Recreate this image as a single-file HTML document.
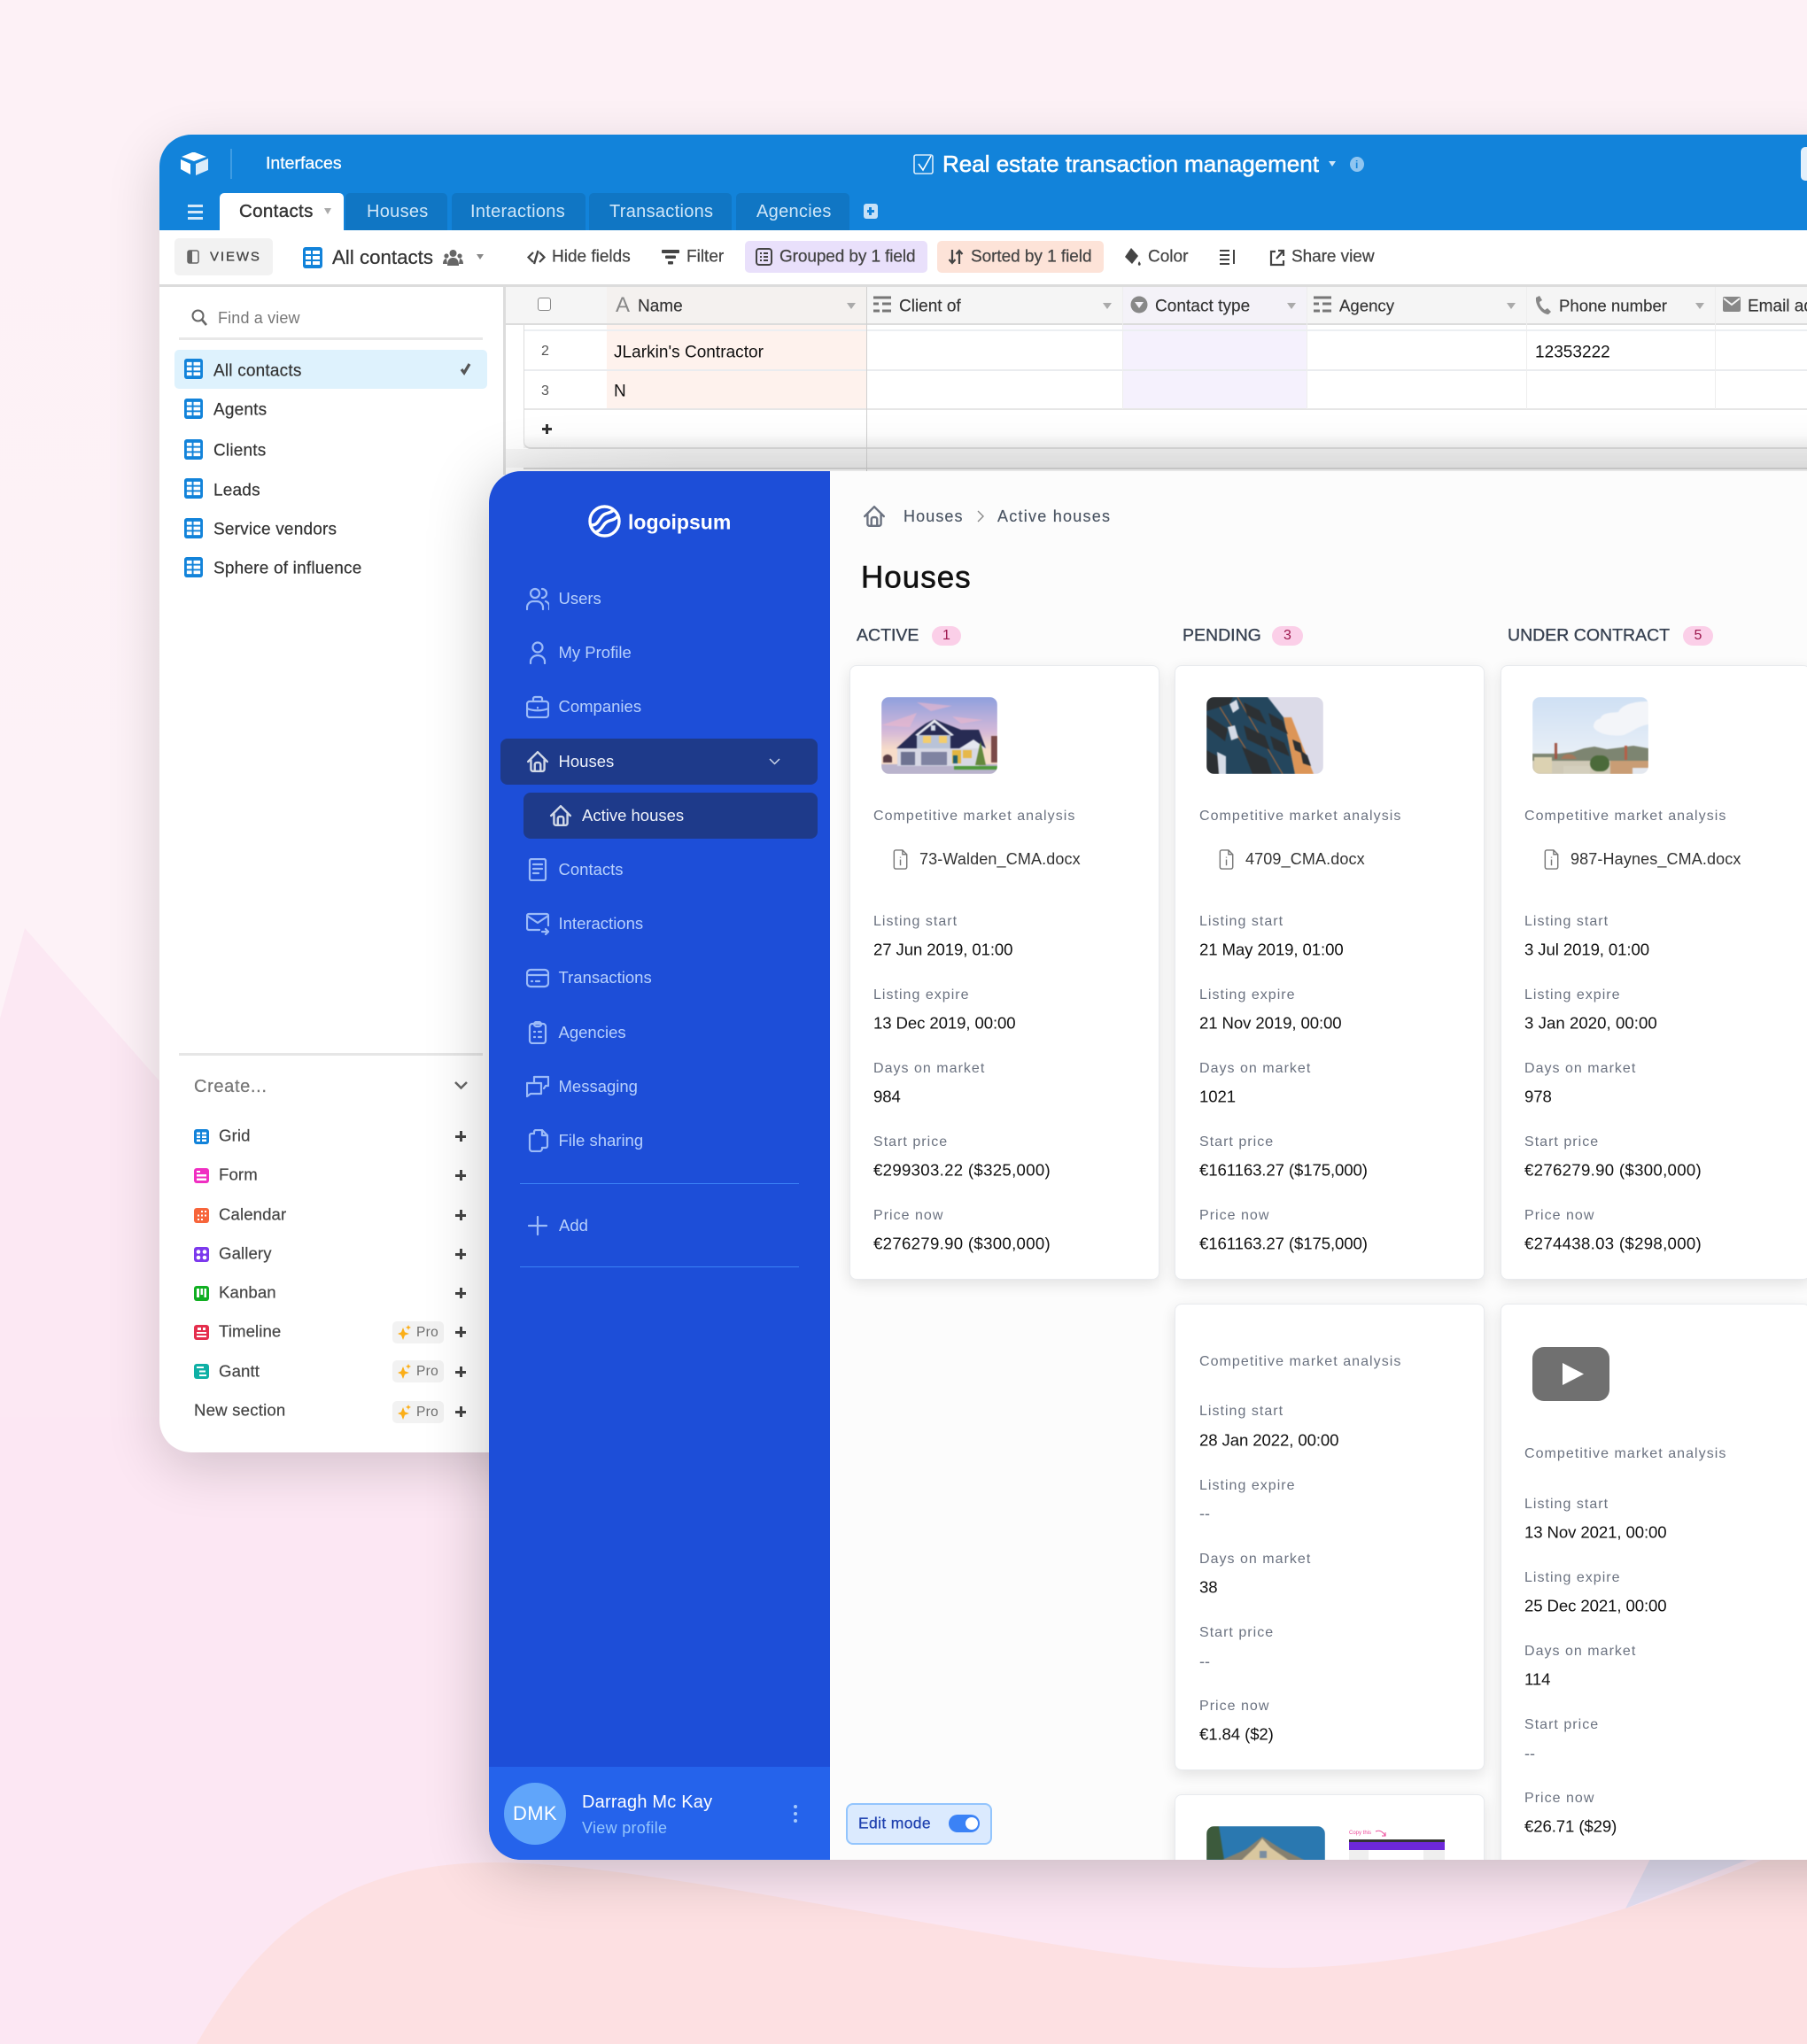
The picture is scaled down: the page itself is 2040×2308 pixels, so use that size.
<!DOCTYPE html>
<html lang="en"><head><meta charset="utf-8"><title>Houses</title>
<style>
*{box-sizing:border-box}
html,body{margin:0;padding:0;width:2040px;height:2308px;overflow:hidden;background:#fdf2f8}
body{position:relative;font-family:"Liberation Sans",sans-serif}
.a{position:absolute}
.t{position:absolute;white-space:nowrap;line-height:1;transform:translateY(-50%)}
.i{position:absolute;display:block;overflow:visible}
.tb{font-size:19px;color:#444;-webkit-text-stroke:.25px #444}
.h{font-size:19px;color:#333;-webkit-text-stroke:.15px #333;margin-top:1.5px}
.c{font-size:19px;color:#111;margin-top:1.5px;letter-spacing:.03px}
.v{font-size:19px;color:#333;-webkit-text-stroke:.2px #333;left:241px;letter-spacing:.2px;margin-top:1.5px}
.cr{font-size:18.6px;color:#444;-webkit-text-stroke:.2px #444;left:247px;letter-spacing:.1px}
.tab{position:absolute;top:218px;height:42px;background:#1076c4;border-radius:5px 5px 0 0}
.tt{font-size:20px;color:#cfe6f8;top:239px;letter-spacing:.3px}
.car{position:absolute;width:0;height:0;border-left:5px solid transparent;border-right:5px solid transparent;border-top:7px solid #aaa}
.pl{position:absolute;left:514px;width:12px;height:12px;background:linear-gradient(#444,#444) center/12px 3px no-repeat,linear-gradient(#444,#444) center/3px 12px no-repeat}
.pro{position:absolute;left:443px;width:58px;height:25px;background:#f2f2f2;border-radius:5px}
.pro span{position:absolute;left:27px;top:5px;font-size:15.5px;line-height:1;color:#6f6f6f;letter-spacing:.3px}
.pro svg{position:absolute;left:6px;top:4px}
.n{font-size:18.5px;color:#b7d0fc;left:630.5px}
.nic{position:absolute;left:594px;fill:none;stroke:#9bbaf8;stroke-width:2.2;stroke-linecap:round;stroke-linejoin:round;width:26px;height:26px}
.card{position:absolute;width:350px;background:#fff;border:1px solid #e8eaee;border-radius:8px;box-shadow:0 5px 16px rgba(0,0,0,.11)}
.l{font-size:16px;color:#6b7280;letter-spacing:1.02px;margin-top:1.5px}
.cm{font-size:16px;color:#6b7280;letter-spacing:1.05px;margin-top:1.5px}
.val{font-size:18.6px;color:#111;letter-spacing:-.1px;margin-top:1px}
.pr{letter-spacing:.32px}
.dash{font-size:18px;color:#6b7280}
.f{font-size:18px;color:#333;letter-spacing:.13px}
.col{font-size:19.5px;color:#374151;-webkit-text-stroke:.35px #374151;top:718px}
.pill{position:absolute;top:707px;height:22px;background:#fbcfe8;border-radius:11px;color:#9d174d;font-size:16px;line-height:22px;text-align:center}
</style></head><body>

<svg class="a" style="left:0;top:0" width="2040" height="2308" viewBox="0 0 2040 2308">
<defs><linearGradient id="bg" x1="0" y1="0" x2="0" y2="1"><stop offset="0" stop-color="#fdf1f6"/><stop offset="1" stop-color="#fdf3f8"/></linearGradient></defs>
<rect width="2040" height="2308" fill="url(#bg)"/>
<path d="M0 1150L28 1048L620 1720V2308H0Z" fill="#fce8f3"/>
<rect x="0" y="1600" width="2040" height="708" fill="#fce7f3"/>
<path d="M1870 2085L1835 2155L2010 2085Z" fill="#e3dff2"/>
<path d="M222 2308C300 2170 400 2103 559 2103C760 2103 1230 2222 1444 2222C1620 2222 1830 2165 1990 2100L2040 2060V2308Z" fill="#fde0e2"/>
</svg>

<!-- Airtable window -->
<div class="a" style="left:180px;top:152px;width:1900px;height:1488px;background:#fff;border-radius:36px 0 0 36px;box-shadow:0 18px 60px rgba(0,0,0,.16)"></div>
<div class="a" style="left:180px;top:152px;width:1860px;height:108px;background:#1283da;border-radius:36px 0 0 0"></div>

<svg class="i" style="left:203px;top:171px" width="33" height="28" viewBox="0 0 33 28"><path d="M14 1L2 6l14 5 14-5-13-5z" fill="#fff"/><path d="M1 9v11l11 6V14z" fill="#fff"/><path d="M18 14v13l14-6V8z" fill="#fff" opacity=".85"/></svg>
<div class="a" style="left:260px;top:168px;width:2px;height:34px;background:#3f9ce3"></div>
<div class="t" style="left:300px;top:185px;font-size:19.5px;color:#fff;-webkit-text-stroke:.3px #fff">Interfaces</div>
<svg class="i" style="left:1031px;top:173px" width="25" height="24" viewBox="0 0 25 24" fill="none" stroke="#d9ecfa" stroke-width="1.6"><rect x="1" y="2" width="21" height="21" rx="2"/><path d="M6 12l5 7 9-16" stroke="#fff"/></svg>
<div class="t" style="left:1064px;top:185px;font-size:26px;color:#fff;-webkit-text-stroke:.55px #fff">Real estate transaction management</div>
<div class="car" style="left:1500px;top:182px;border-top-color:#cfe6f8;border-left-width:4px;border-right-width:4px;border-top-width:6px"></div>
<div class="a" style="left:1524px;top:177px;width:16px;height:17px;border-radius:50%;background:#8fc5f0"></div>
<div class="t" style="left:1530px;top:186px;font-size:12px;color:#1283da;font-weight:bold">i</div>
<div class="a" style="left:2033px;top:166px;width:20px;height:38px;background:#e3f0fb;border-radius:5px"></div>

<div class="a" style="left:212px;top:231px;width:17px;height:3px;background:#d3e8f9"></div>
<div class="a" style="left:212px;top:238px;width:17px;height:3px;background:#d3e8f9"></div>
<div class="a" style="left:212px;top:245px;width:17px;height:3px;background:#d3e8f9"></div>
<div class="a" style="left:248px;top:218px;width:140px;height:42px;background:#fff;border-radius:5px 5px 0 0"></div>
<div class="t" style="left:270px;top:239px;font-size:20.5px;color:#333;-webkit-text-stroke:.4px #333;letter-spacing:.35px">Contacts</div>
<div class="car" style="left:366px;top:235px;border-left-width:4px;border-right-width:4px"></div>
<div class="tab" style="left:390px;width:115px"></div><div class="t tt" style="left:414px">Houses</div>
<div class="tab" style="left:510px;width:151px"></div><div class="t tt" style="left:531px">Interactions</div>
<div class="tab" style="left:665px;width:161px"></div><div class="t tt" style="left:688px">Transactions</div>
<div class="tab" style="left:831px;width:128px"></div><div class="t tt" style="left:854px">Agencies</div>
<div class="a" style="left:975px;top:230px;width:16px;height:17px;border-radius:3px;background:#c7e1f7"></div>
<div class="a" style="left:979px;top:237px;width:8px;height:3px;background:#1283da"></div><div class="a" style="left:981px;top:234px;width:3px;height:9px;background:#1283da"></div>

<!-- toolbar -->
<div class="a" style="left:180px;top:321px;width:1860px;height:3px;background:#dcdcdc"></div>
<div class="a" style="left:197px;top:269px;width:111px;height:42px;background:#f2f2f2;border-radius:5px"></div>
<svg class="i" style="left:211px;top:282px" width="15" height="16"><rect x="1" y="1" width="12" height="14" rx="2" fill="none" stroke="#666" stroke-width="1.5"/><rect x="1" y="1" width="5" height="14" rx="1" fill="#666"/></svg>
<div class="t" style="left:237px;top:290px;font-size:15px;color:#444;-webkit-text-stroke:.3px #444;letter-spacing:1.9px">VIEWS</div>
<svg class="i" style="left:342px;top:279px" width="22" height="24" viewBox="0 0 22 24"><use href="#g"/></svg>
<div class="t" style="left:375px;top:291px;font-size:22.3px;color:#333;-webkit-text-stroke:.25px #333">All contacts</div>
<svg class="i" style="left:500px;top:281px" width="23" height="20" viewBox="0 0 23 20" fill="#666"><circle cx="11.5" cy="5" r="4"/><circle cx="4" cy="8" r="2.6"/><circle cx="19" cy="8" r="2.6"/><path d="M5 19c0-7 3-9 6.500-9s6.500 2 6.500 9z"/><path d="M0 17c0-4 2-6 4-6l1 6zM23 17c0-4-2-6-4-6l-1 6z"/></svg>
<div class="car" style="left:538px;top:287px;border-top-color:#888;border-left-width:4px;border-right-width:4px;border-top-width:6px"></div>
<svg class="i" style="left:595px;top:281px" width="21" height="19" viewBox="0 0 21 19" fill="none" stroke="#444" stroke-width="2.2"><path d="M7 4L1.500 9.500 7 15M14 4l5.500 5.500L14 15"/><path d="M12.500 2L8 17" stroke-width="2.4"/></svg>
<div class="t tb" style="left:623px;top:290px">Hide fields</div>
<svg class="i" style="left:747px;top:282px" width="20" height="17"><rect y="0" width="20" height="4" rx="1" fill="#444"/><rect x="4" y="6.5" width="12" height="3.5" rx="1" fill="#444"/><rect x="7" y="13" width="6" height="3.5" rx="1" fill="#444"/></svg>
<div class="t tb" style="left:775px;top:290px">Filter</div>
<div class="a" style="left:841px;top:272px;width:206px;height:36px;background:#e9e0fb;border-radius:5px"></div>
<svg class="i" style="left:853px;top:280px" width="19" height="20" fill="none"><rect x="1" y="1" width="17" height="18" rx="3" stroke="#444" stroke-width="2"/><path d="M5 6h2M9 6h5M5 10h2M9 10h5M5 14h2M9 14h5" stroke="#444" stroke-width="2"/></svg>
<div class="t tb" style="left:880px;top:290px;letter-spacing:-.1px">Grouped by 1 field</div>
<div class="a" style="left:1058px;top:272px;width:188px;height:36px;background:#fde3d8;border-radius:5px"></div>
<svg class="i" style="left:1070px;top:281px" width="18" height="18" fill="none" stroke="#444" stroke-width="2.2"><path d="M5 1v15M1.500 12L5 16l3.500-4M13 17V2M9.500 6L13 2l3.500 4"/></svg>
<div class="t tb" style="left:1096px;top:290px;letter-spacing:-.05px">Sorted by 1 field</div>
<svg class="i" style="left:1269px;top:280px" width="20" height="21" viewBox="0 0 20 21" fill="#444"><path d="M8 0l8 9-7 9-8-8zM17 15c1.500 2 2 3 1.500 4s-2 1-2.500 0 0-2 1-4z"/></svg>
<div class="t tb" style="left:1296px;top:290px">Color</div>
<svg class="i" style="left:1377px;top:281px" width="20" height="18" fill="none" stroke="#444" stroke-width="2"><path d="M0 2h11M0 7h11M0 12h11M0 17h11M16 1v16"/></svg>
<div class="t tb" style="left:1458px;top:290px;letter-spacing:-.05px">Share view</div>
<svg class="i" style="left:1433px;top:281px" width="18" height="19" fill="none" stroke="#444" stroke-width="2.2"><path d="M7 3H2v15h14v-5M8 11l8-9M10 2h6v6"/></svg>

<!-- grid header -->
<div class="a" style="left:568px;top:324px;width:1472px;height:42px;background:#f5f5f5"></div>
<div class="a" style="left:685px;top:324px;width:293px;height:42px;background:#f4f1ef"></div>
<div class="a" style="left:1267px;top:324px;width:208px;height:42px;background:#f4f2f8"></div>
<div class="a" style="left:568px;top:365px;width:1472px;height:2px;background:#dcdcdc"></div>
<div class="a" style="left:568px;top:324px;width:3px;height:212px;background:#dcdcdc"></div>
<div class="a" style="left:607px;top:336px;width:15px;height:15px;border:1.5px solid #888;border-radius:3px;background:#fff"></div>
<div class="t" style="left:695px;top:345px;font-size:24px;color:#888">A</div>
<div class="t h" style="left:720px;top:344px">Name</div>
<div class="car" style="left:956px;top:342px"></div>
<svg class="i" style="left:986px;top:334px" width="21" height="20"><path d="M0 2h20M10 9h10M10 17h10M0 17h7M0 9h6" stroke="#777" stroke-width="3"/></svg>
<div class="t h" style="left:1015px;top:344px">Client of</div>
<div class="car" style="left:1245px;top:342px"></div>
<svg class="i" style="left:1276px;top:334px" width="20" height="20"><circle cx="10" cy="10" r="9.5" fill="#888"/><path d="M5 7h10l-5 7z" fill="#f4f2f8"/></svg>
<div class="t h" style="left:1304px;top:344px;letter-spacing:.05px">Contact type</div>
<div class="car" style="left:1453px;top:342px"></div>
<svg class="i" style="left:1483px;top:334px" width="21" height="20"><path d="M0 2h20M10 9h10M10 17h10M0 17h7M0 9h6" stroke="#777" stroke-width="3"/></svg>
<div class="t h" style="left:1512px;top:344px;font-size:18.6px">Agency</div>
<div class="car" style="left:1701px;top:342px"></div>
<svg class="i" style="left:1733px;top:334px" width="20" height="21" viewBox="0 0 20 21"><path d="M1 2l4-2 3 5-3 2c0 3 3 7 6 9l3-2 4 4-3 3C8 21 0 11 1 2z" fill="#888"/></svg>
<div class="t h" style="left:1760px;top:344px;font-size:18.6px">Phone number</div>
<div class="car" style="left:1914px;top:342px"></div>
<svg class="i" style="left:1945px;top:335px" width="20" height="17"><rect width="20" height="17" rx="2" fill="#888"/><path d="M1 2l9 7 9-7" fill="none" stroke="#f5f5f5" stroke-width="2"/></svg>
<div class="t h" style="left:1973px;top:344px">Email ad</div>

<!-- grid body -->
<div class="a" style="left:685px;top:367px;width:293px;height:95px;background:#fef2ed"></div>
<div class="a" style="left:1267px;top:367px;width:208px;height:95px;background:#f5f1fd"></div>
<div class="a" style="left:591px;top:372px;width:1449px;height:2px;background:#eceff2"></div>
<div class="a" style="left:591px;top:417px;width:1449px;height:2px;background:#eaecef"></div>
<div class="a" style="left:591px;top:461px;width:1449px;height:2px;background:#e6e6e6"></div>
<div class="a" style="left:1267px;top:324px;width:1px;height:138px;background:#eee"></div>
<div class="a" style="left:1475px;top:324px;width:1px;height:138px;background:#eee"></div>
<div class="a" style="left:1723px;top:324px;width:1px;height:138px;background:#eee"></div>
<div class="a" style="left:1936px;top:324px;width:1px;height:138px;background:#eee"></div>
<div class="a" style="left:591px;top:366px;width:1px;height:130px;background:#ddd"></div>
<div class="t" style="left:611px;top:397px;font-size:16px;color:#555">2</div>
<div class="t" style="left:611px;top:442px;font-size:16px;color:#555">3</div>
<div class="t c" style="left:693px;top:396px">JLarkin's Contractor</div>
<div class="t c" style="left:693px;top:440px">N</div>
<div class="t c" style="left:1733px;top:396px">12353222</div>
<div class="a" style="left:612px;top:483px;width:11px;height:3px;background:#333"></div><div class="a" style="left:616px;top:479px;width:3px;height:11px;background:#333"></div>
<div class="a" style="left:591px;top:490px;width:1449px;height:16px;background:linear-gradient(rgba(255,255,255,0),rgba(238,238,238,.8))"></div>
<div class="a" style="left:591px;top:495px;width:20px;height:12px;border-left:1px solid #ddd;border-bottom:2px solid #d8d8d8;border-radius:0 0 0 8px"></div>
<div class="a" style="left:611px;top:505px;width:1429px;height:2px;background:#d8d8d8"></div>
<div class="a" style="left:571px;top:507px;width:1469px;height:21px;background:linear-gradient(90deg,#f6f6f6,#efefef 200px)"></div>
<div class="a" style="left:591px;top:528px;width:1449px;height:2px;background:#d8d8d8"></div>
<div class="a" style="left:978px;top:324px;width:1px;height:208px;background:#d0d0d0"></div>

<!-- Views sidebar -->
<svg class="i" style="left:216px;top:349px" width="18" height="19" fill="none" stroke="#666" stroke-width="2"><circle cx="7.5" cy="7.5" r="6"/><path d="M12 12l5 6" stroke-width="2.6"/></svg>
<div class="t" style="left:246px;top:359px;font-size:18px;color:#777;letter-spacing:.15px">Find a view</div>
<div class="a" style="left:202px;top:381px;width:343px;height:3px;background:#e8e8e8"></div>
<div class="a" style="left:197px;top:395px;width:353px;height:44px;background:#def2fd;border-radius:5px"></div>
<svg width="0" height="0" style="position:absolute"><defs>
<symbol id="g" viewBox="0 0 22 24"><rect width="22" height="24" rx="3" fill="#1283da"/><g fill="#fff"><rect x="3" y="4" width="6" height="4"/><rect x="11" y="4" width="8" height="4"/><rect x="3" y="10" width="6" height="4"/><rect x="11" y="10" width="8" height="4"/><rect x="3" y="16" width="6" height="4"/><rect x="11" y="16" width="8" height="4"/></g></symbol>
<symbol id="home" viewBox="0 0 24 24"><path d="M2 12L12 2l10 10M5 10v10a2 2 0 002 2h10a2 2 0 002-2V10M9 22v-7a2 2 0 012-2h2a2 2 0 012 2v7" fill="none" stroke-width="2.2" stroke-linecap="round" stroke-linejoin="round"/></symbol>
<symbol id="star" viewBox="0 0 15 17"><path d="M6 3l2 5.200L13 10l-5 1.800L6 17l-2-5.200L0 10l4-1.800zM12 0l.8 1.900L15 3l-2.200.9L12 6l-.8-2.100L9 3l2.200-1.100z" fill="#fbae17"/></symbol>
<symbol id="doc" viewBox="0 0 18 24"><path d="M3 1h8l5 5v15a2 2 0 01-2 2H3a2 2 0 01-2-2V3a2 2 0 012-2zM11 1v5h5M8.500 12v7M8.500 9v1" fill="none" stroke="#777" stroke-width="1.5"/></symbol>
</defs></svg>
<svg class="i" style="left:208px;top:405px" width="21" height="23"><use href="#g"/></svg><div class="t v" style="top:417px">All contacts</div>
<svg class="i" style="left:519px;top:410px" width="14" height="13" fill="none" stroke="#555" stroke-width="3.2"><path d="M2 7l3 4 6-10"/></svg>
<svg class="i" style="left:208px;top:450px" width="21" height="23"><use href="#g"/></svg><div class="t v" style="top:461px">Agents</div>
<svg class="i" style="left:208px;top:496px" width="21" height="23"><use href="#g"/></svg><div class="t v" style="top:507px">Clients</div>
<svg class="i" style="left:208px;top:540px" width="21" height="23"><use href="#g"/></svg><div class="t v" style="top:552px">Leads</div>
<svg class="i" style="left:208px;top:585px" width="21" height="23"><use href="#g"/></svg><div class="t v" style="top:596px">Service vendors</div>
<svg class="i" style="left:208px;top:629px" width="21" height="23"><use href="#g"/></svg><div class="t v" style="top:640px">Sphere of influence</div>

<div class="a" style="left:202px;top:1189px;width:343px;height:3px;background:#e6e6e6"></div>
<div class="t" style="left:219px;top:1227px;font-size:20px;color:#777;-webkit-text-stroke:.25px #777;letter-spacing:.65px">Create...</div>
<svg class="i" style="left:513px;top:1221px" width="15" height="10" fill="none" stroke="#666" stroke-width="2.5"><path d="M1 1l6.500 6.500L14 1"/></svg>

<svg class="i" style="left:219px;top:1275px" width="17" height="17"><rect width="17" height="17" rx="3" fill="#1283da"/><path d="M3 3.500h4v2.500H3zM9 3.500h5v2.500H9zM3 7.500h4V10H3zM9 7.500h5V10H9zM3 11.500h4V14H3zM9 11.500h5V14H9z" fill="#fff"/></svg>
<div class="t cr" style="top:1283px">Grid</div><div class="pl" style="top:1277px"></div>
<svg class="i" style="left:219px;top:1319px" width="17" height="17"><rect width="17" height="17" rx="3" fill="#f02fc2"/><path d="M3 3h4v2H3zM3 7h11v2.500H3zM3 11.500h11V14H3z" fill="#fff"/></svg>
<div class="t cr" style="top:1327px">Form</div><div class="pl" style="top:1321px"></div>
<svg class="i" style="left:219px;top:1364px" width="17" height="17"><rect width="17" height="17" rx="3" fill="#f7653b"/><g fill="#fff"><rect x="8" y="3" width="2" height="2"/><rect x="12" y="3" width="2" height="2"/><rect x="4" y="7.5" width="2" height="2"/><rect x="8" y="7.5" width="2" height="2"/><rect x="12" y="7.5" width="2" height="2"/><rect x="4" y="12" width="2" height="2"/><rect x="8" y="12" width="2" height="2"/></g></svg>
<div class="t cr" style="top:1372px">Calendar</div><div class="pl" style="top:1366px"></div>
<svg class="i" style="left:219px;top:1408px" width="17" height="17"><rect width="17" height="17" rx="3" fill="#7c39ed"/><g fill="#fff"><circle cx="5" cy="5.5" r="2.3"/><circle cx="12" cy="5.5" r="2.3"/><circle cx="5" cy="12" r="2.3"/><circle cx="12" cy="12" r="2.3"/></g></svg>
<div class="t cr" style="top:1416px">Gallery</div><div class="pl" style="top:1410px"></div>
<svg class="i" style="left:219px;top:1452px" width="17" height="17"><rect width="17" height="17" rx="3" fill="#11af22"/><path d="M3 3h3v10H3zM7.500 3h2.500v7H7.500zM11.500 3H14v10h-2.500z" fill="#fff"/></svg>
<div class="t cr" style="top:1460px">Kanban</div><div class="pl" style="top:1454px"></div>
<svg class="i" style="left:219px;top:1496px" width="17" height="17"><rect width="17" height="17" rx="3" fill="#e52e4d"/><path d="M4 3h4v3H4zM10 3h3v3h-3zM3 8h11v2H3zM3 12h11v2H3z" fill="#fff"/></svg>
<div class="t cr" style="top:1504px">Timeline</div><div class="pl" style="top:1498px"></div>
<div class="pro" style="top:1492px"><svg width="15" height="17"><use href="#star"/></svg><span>Pro</span></div>
<svg class="i" style="left:219px;top:1540px" width="17" height="17"><rect width="17" height="17" rx="3" fill="#0fb0a5"/><path d="M3 3h8v2H3zM6 7.500h7v2H6zM6 12h8v2H6z" fill="#fff"/></svg>
<div class="t cr" style="top:1549px">Gantt</div><div class="pl" style="top:1543px"></div>
<div class="pro" style="top:1536px"><svg width="15" height="17"><use href="#star"/></svg><span>Pro</span></div>
<div class="t cr" style="left:219px;top:1593px;letter-spacing:.2px">New section</div><div class="pl" style="top:1588px"></div>
<div class="pro" style="top:1582px"><svg width="15" height="17"><use href="#star"/></svg><span>Pro</span></div>

<!-- Modal -->
<div class="a" style="left:552px;top:532px;width:1600px;height:1568px;border-radius:36px 0 0 36px;box-shadow:0 8px 70px rgba(0,0,0,.24)"></div>
<div class="a" style="left:552px;top:532px;width:1488px;height:1568px;border-radius:36px 0 0 36px;overflow:hidden;background:#fcfcfc">
 <div class="a" style="left:0;top:0;width:385px;height:1568px;background:#1d4ed8"></div>
 <div class="a" style="left:0;top:1463px;width:385px;height:105px;background:#2563eb"></div>
</div>

<!-- logo -->
<svg class="i" style="left:664px;top:570px" width="37" height="37" viewBox="0 0 37 37" fill="none" stroke="#fff" stroke-width="3.4"><circle cx="18.5" cy="18.5" r="16.5"/><path d="M4 23c4 0 6-2 8-5s4-7 8-8 7-2 10-5"/><path d="M8 31c4-1 6-3 8-6s4-6 8-7 7-2 10-6"/></svg>
<div class="t" style="left:709px;top:590px;font-size:23px;font-weight:bold;color:#fff">logoipsum</div>

<!-- nav -->
<div class="a" style="left:565px;top:834px;width:358px;height:52px;background:#1e3a8a;border-radius:8px"></div>
<div class="a" style="left:591px;top:895px;width:332px;height:52px;background:#1e3a8a;border-radius:8px"></div>
<svg class="nic" style="top:663px" viewBox="0 0 26 26"><circle cx="10" cy="7" r="5"/><path d="M1 25v-2a7 7 0 017-7h4a7 7 0 017 7v2M18 2a5 5 0 010 10M22 16a6 6 0 014 7v2"/></svg>
<div class="t n" style="top:676px">Users</div>
<svg class="nic" style="top:724px" viewBox="0 0 26 26"><circle cx="13" cy="7" r="5.5"/><path d="M5 25v-2a8 7 0 0116 0v2"/></svg>
<div class="t n" style="top:737px">My Profile</div>
<svg class="nic" style="top:785px" viewBox="0 0 26 26"><rect x="1" y="7" width="24" height="18" rx="3"/><path d="M8 7V4a2 2 0 012-2h6a2 2 0 012 2v3M1 15c7 3 17 3 24 0M13 14v.5"/></svg>
<div class="t n" style="top:798px">Companies</div>
<svg class="i" style="left:594px;top:847px;stroke:#d1d8e6" width="26" height="26"><use href="#home"/></svg>
<div class="t n" style="top:860px;color:#eef2fa">Houses</div>
<svg class="i" style="left:868px;top:856px" width="13" height="8" fill="none" stroke="#cbd5e8" stroke-width="1.5"><path d="M1 1l5.500 5.500L12 1"/></svg>
<svg class="i" style="left:620px;top:908px;stroke:#d1d8e6" width="26" height="26"><use href="#home"/></svg>
<div class="t n" style="left:657px;top:921px;color:#eef2fa">Active houses</div>
<svg class="nic" style="top:969px" viewBox="0 0 26 26"><rect x="4" y="1" width="18" height="24" rx="2"/><path d="M8 7h10M8 12h10M8 17h6"/></svg>
<div class="t n" style="top:982px">Contacts</div>
<svg class="nic" style="top:1030px" viewBox="0 0 26 26"><path d="M25 15V4a2 2 0 00-2-2H3a2 2 0 00-2 2v14a2 2 0 002 2h12M1 4l12 8 12-8M18 22h7M22 19l3 3-3 3"/></svg>
<div class="t n" style="top:1043px">Interactions</div>
<svg class="nic" style="top:1091px" viewBox="0 0 26 26"><rect x="1" y="4" width="24" height="19" rx="4"/><path d="M1 10h24M6 17h1M11 17h4"/></svg>
<div class="t n" style="top:1104px">Transactions</div>
<svg class="nic" style="top:1153px" viewBox="0 0 26 26"><rect x="4" y="3" width="18" height="22" rx="3"/><rect x="9" y="1" width="8" height="5" rx="2.5"/><path d="M9 12h1M14 12h3M9 18h1M14 18h3"/></svg>
<div class="t n" style="top:1166px">Agencies</div>
<svg class="nic" style="top:1214px" viewBox="0 0 26 26"><path d="M9 9V2h16v10h-3l-2 3M17 9H1v15l4-3h12z"/></svg>
<div class="t n" style="top:1227px">Messaging</div>
<svg class="nic" style="top:1275px" viewBox="0 0 26 26"><path d="M9 5V3a2 2 0 012-2h7l6 6v12a2 2 0 01-2 2h-4M18 1v6h6"/><path d="M9 5H6a2 2 0 00-2 2v15a3 3 0 003 3h8a3 3 0 003-3v-1"/></svg>
<div class="t n" style="top:1288px">File sharing</div>
<div class="a" style="left:587px;top:1336px;width:315px;height:1px;background:#3b82f6"></div>
<svg class="nic" style="top:1371px" viewBox="0 0 26 26"><path d="M13 3v20M3 13h20"/></svg>
<div class="t n" style="left:631px;top:1384px">Add</div>
<div class="a" style="left:587px;top:1430px;width:315px;height:1px;background:#3b82f6"></div>

<!-- footer -->
<div class="a" style="left:569px;top:2013px;width:70px;height:70px;border-radius:50%;background:#60a5fa"></div>
<div class="t" style="left:579px;top:2048px;font-size:22px;color:#fff;letter-spacing:.3px">DMK</div>
<div class="t" style="left:657px;top:2035px;font-size:20px;color:#fff;letter-spacing:.2px">Darragh Mc Kay</div>
<div class="t" style="left:657px;top:2064px;font-size:18px;color:#93c5fd;letter-spacing:.3px">View profile</div>
<div class="a" style="left:896px;top:2038px;width:4px;height:4px;border-radius:50%;background:#a5c8fb"></div>
<div class="a" style="left:896px;top:2046px;width:4px;height:4px;border-radius:50%;background:#a5c8fb"></div>
<div class="a" style="left:896px;top:2054px;width:4px;height:4px;border-radius:50%;background:#a5c8fb"></div>

<!-- main -->
<svg class="i" style="left:974px;top:570px;stroke:#6b7280" width="26" height="26"><use href="#home"/></svg>
<div class="t" style="left:1020px;top:583px;font-size:18px;color:#4b5563;-webkit-text-stroke:.15px #4b5563;letter-spacing:1.1px">Houses</div>
<svg class="i" style="left:1103px;top:576px" width="8" height="14" fill="none" stroke="#888" stroke-width="1.4"><path d="M1 1l6 6-6 6"/></svg>
<div class="t" style="left:1126px;top:583px;font-size:18px;color:#4b5563;-webkit-text-stroke:.15px #4b5563;letter-spacing:1.25px">Active houses</div>
<div class="t" style="left:972px;top:652px;font-size:35px;color:#111;-webkit-text-stroke:.6px #111;letter-spacing:1px">Houses</div>

<div class="t col" style="left:967px">ACTIVE</div><div class="pill" style="left:1052px;width:33px">1</div>
<div class="t col" style="left:1335px">PENDING</div><div class="pill" style="left:1436px;width:35px">3</div>
<div class="t col" style="left:1702px">UNDER CONTRACT</div><div class="pill" style="left:1900px;width:34px">5</div>

<!-- clipped card area -->
<div class="a" style="left:0;top:0;width:2040px;height:2100px;overflow:hidden">
<div class="card" style="left:959px;top:751px;height:694px"></div>
<div class="card" style="left:1326px;top:751px;height:694px"></div>
<div class="card" style="left:1694px;top:751px;height:694px"></div>

<div class="a" style="left:995px;top:787px;width:131px;height:87px;border-radius:9px;overflow:hidden">
<svg width="131" height="87" viewBox="0 0 131 87" style="filter:blur(.5px)"><defs><linearGradient id="s1" x1="0" y1="0" x2="0" y2="1"><stop offset="0" stop-color="#8fa0de"/><stop offset=".45" stop-color="#d5b9d8"/><stop offset=".68" stop-color="#f7dcc9"/></linearGradient></defs>
<rect width="131" height="87" fill="url(#s1)"/><path d="M0 32l40-14-8 16zM40 6l40 4-24 6zM80 22l35 4-25 4z" fill="#eeb8cb" opacity=".6"/>
<rect y="76" width="131" height="11" fill="#b9b3cc"/>
<rect x="18" y="58" width="92" height="20" fill="#d7d8e4"/>
<path d="M17 58L40 37L50 30L60 25L72 30L90 37L110 37L118 58Z" fill="#272b53"/>
<rect x="40" y="43" width="38" height="15" fill="#b9c3d8"/>
<path d="M38 43L60 25L82 43L79 44L60 29L41 44Z" fill="#e6e8ef"/><rect x="56" y="32" width="5" height="6" fill="#d7ddea"/>
<rect x="47" y="44" width="9" height="8" fill="#f3cd6d"/><rect x="65" y="44" width="9" height="8" fill="#f3cd6d"/>
<rect x="22" y="62" width="16" height="15" fill="#6e7391"/><rect x="45" y="62" width="29" height="15" fill="#7f83a1"/>
<rect x="80" y="60" width="10" height="15" fill="#e4b640"/><rect x="81" y="66" width="5" height="9" fill="#1f5f6e"/><rect x="92" y="60" width="10" height="9" fill="#e6b84a"/>
<path d="M88 58L104 48L118 58Z" fill="#e5e7f0"/>
<path d="M106 77l6-27 6 27z" fill="#64893c"/><rect x="82" y="78" width="49" height="4" fill="#4f9a3c"/>
<path d="M2 68a6 7 0 0110 0v6H2z" fill="#5a3d44"/><rect x="124" y="44" width="7" height="30" fill="#7a4a48"/>
</svg></div>

<div class="a" style="left:1362px;top:787px;width:132px;height:87px;border-radius:9px;overflow:hidden">
<svg width="132" height="87" viewBox="0 0 132 87" style="filter:blur(.5px)"><rect width="132" height="87" fill="#dcdbe8"/>
<path d="M0 0H69L87 23L100 87H0z" fill="#24465d"/><path d="M87 23H96L121 87H100z" fill="#dc9557"/>
<path d="M8 0L62 87M35 0L86 87" stroke="#a1683f" stroke-width="1.2" fill="none"/>
<g fill="#2c3033"><path d="M0 0h30l-4 8L0 16zM0 20l24 16-3 14L0 34zM0 60l22 12-2 15H0zM42 6l18 9 8 16-22-10zM42 32l24 12 6 16-26-12zM40 56l28 14 6 17H52z"/><path d="M70 18l16 9 6 15-18-9zM72 44l16 8 6 15-18-8zM97 48l9 4 3 12-9-4zM106 60l8 6 4 12-9-3z"/></g>
<path d="M26 8l8-5 3 10-7 5zM24 34l8-2 4 14-8 3zM12 62l10 5v20H14z" fill="#d5dbe6"/></svg></div>

<div class="a" style="left:1730px;top:787px;width:131px;height:87px;border-radius:9px;overflow:hidden">
<svg width="131" height="87" viewBox="0 0 131 87" style="filter:blur(.6px)"><defs><linearGradient id="s3" x1="0" y1="0" x2="0" y2="1"><stop offset="0" stop-color="#cfe0f4"/><stop offset=".75" stop-color="#e8eff7"/></linearGradient></defs>
<rect width="131" height="87" fill="url(#s3)"/>
<path d="M69 34c0-8 6-9 8-10 2-7 14-6 20-7 4-8 16-12 34-12v26c-12 2-18 8-28 12-12 2-30-1-34-9z" fill="#f3f5f9"/>
<path d="M0 64h30l16-2 12-4 12-2 14 3 16-2 14-2 17 3v20H0z" fill="#7d8571"/>
<rect x="25" y="52" width="3" height="18" fill="#a05646"/><rect x="104" y="55" width="3" height="16" fill="#b55f48"/>
<path d="M32 70a10 10 0 0118 0z" fill="#a4785b"/>
<rect y="72" width="131" height="15" fill="#cfc9b6"/><rect x="2" y="68" width="20" height="18" fill="#dcd2b2"/>
<rect x="88" y="72" width="43" height="15" fill="#c99d75"/><rect x="65" y="66" width="22" height="18" rx="9" fill="#4b6a3a"/>
<rect x="35" y="78" width="30" height="9" fill="#d4cfbd"/><rect x="113" y="80" width="18" height="7" fill="#e4e8ef"/></svg></div>

<div class="t cm" style="left:986px;top:920px">Competitive market analysis</div>
<div class="t cm" style="left:1354px;top:920px">Competitive market analysis</div>
<div class="t cm" style="left:1721px;top:920px">Competitive market analysis</div>
<svg class="i" style="left:1008px;top:959px" width="18" height="23"><use href="#doc"/></svg>
<svg class="i" style="left:1376px;top:959px" width="18" height="23"><use href="#doc"/></svg>
<svg class="i" style="left:1743px;top:959px" width="18" height="23"><use href="#doc"/></svg>
<div class="t f" style="left:1038px;top:970px">73-Walden_CMA.docx</div>
<div class="t f" style="left:1406px;top:970px">4709_CMA.docx</div>
<div class="t f" style="left:1773px;top:970px">987-Haynes_CMA.docx</div>

<div class="t l" style="left:986px;top:1039px">Listing start</div><div class="t val" style="left:986px;top:1072px">27 Jun 2019, 01:00</div>
<div class="t l" style="left:986px;top:1122px">Listing expire</div><div class="t val" style="left:986px;top:1155px">13 Dec 2019, 00:00</div>
<div class="t l" style="left:986px;top:1205px">Days on market</div><div class="t val" style="left:986px;top:1238px">984</div>
<div class="t l" style="left:986px;top:1288px">Start price</div><div class="t val pr" style="left:986px;top:1321px">€299303.22 ($325,000)</div>
<div class="t l" style="left:986px;top:1371px">Price now</div><div class="t val pr" style="left:986px;top:1404px">€276279.90 ($300,000)</div>

<div class="t l" style="left:1354px;top:1039px">Listing start</div><div class="t val" style="left:1354px;top:1072px">21 May 2019, 01:00</div>
<div class="t l" style="left:1354px;top:1122px">Listing expire</div><div class="t val" style="left:1354px;top:1155px">21 Nov 2019, 00:00</div>
<div class="t l" style="left:1354px;top:1205px">Days on market</div><div class="t val" style="left:1354px;top:1238px">1021</div>
<div class="t l" style="left:1354px;top:1288px">Start price</div><div class="t val" style="left:1354px;top:1321px">€161163.27 ($175,000)</div>
<div class="t l" style="left:1354px;top:1371px">Price now</div><div class="t val" style="left:1354px;top:1404px">€161163.27 ($175,000)</div>

<div class="t l" style="left:1721px;top:1039px">Listing start</div><div class="t val" style="left:1721px;top:1072px">3 Jul 2019, 01:00</div>
<div class="t l" style="left:1721px;top:1122px">Listing expire</div><div class="t val" style="left:1721px;top:1155px;letter-spacing:.05px">3 Jan 2020, 00:00</div>
<div class="t l" style="left:1721px;top:1205px">Days on market</div><div class="t val" style="left:1721px;top:1238px">978</div>
<div class="t l" style="left:1721px;top:1288px">Start price</div><div class="t val pr" style="left:1721px;top:1321px">€276279.90 ($300,000)</div>
<div class="t l" style="left:1721px;top:1371px">Price now</div><div class="t val pr" style="left:1721px;top:1404px">€274438.03 ($298,000)</div>

<!-- row 2 -->
<div class="card" style="left:1326px;top:1472px;height:527px"></div>
<div class="t cm" style="left:1354px;top:1536px">Competitive market analysis</div>
<div class="t l" style="left:1354px;top:1592px">Listing start</div><div class="t val" style="left:1354px;top:1626px">28 Jan 2022, 00:00</div>
<div class="t l" style="left:1354px;top:1676px">Listing expire</div><div class="t dash" style="left:1354px;top:1709px">--</div>
<div class="t l" style="left:1354px;top:1759px">Days on market</div><div class="t val" style="left:1354px;top:1792px">38</div>
<div class="t l" style="left:1354px;top:1842px">Start price</div><div class="t dash" style="left:1354px;top:1876px">--</div>
<div class="t l" style="left:1354px;top:1925px">Price now</div><div class="t val" style="left:1354px;top:1958px">€1.84 ($2)</div>

<div class="card" style="left:1694px;top:1472px;height:700px"></div>
<svg class="i" style="left:1730px;top:1521px" width="87" height="61" viewBox="0 0 87 61"><rect width="87" height="61" rx="13" fill="#707070"/><path d="M34 18l24 12.500L34 43z" fill="#fff"/></svg>
<div class="t cm" style="left:1721px;top:1640px">Competitive market analysis</div>
<div class="t l" style="left:1721px;top:1697px">Listing start</div><div class="t val" style="left:1721px;top:1730px">13 Nov 2021, 00:00</div>
<div class="t l" style="left:1721px;top:1780px">Listing expire</div><div class="t val" style="left:1721px;top:1813px">25 Dec 2021, 00:00</div>
<div class="t l" style="left:1721px;top:1863px">Days on market</div><div class="t val" style="left:1721px;top:1896px">114</div>
<div class="t l" style="left:1721px;top:1946px">Start price</div><div class="t dash" style="left:1721px;top:1980px">--</div>
<div class="t l" style="left:1721px;top:2029px">Price now</div><div class="t val" style="left:1721px;top:2062px">€26.71 ($29)</div>

<div class="card" style="left:1326px;top:2026px;height:120px"></div>
<div class="a" style="left:1362px;top:2062px;width:134px;height:60px;border-radius:9px 9px 0 0;overflow:hidden">
<svg width="134" height="60" viewBox="0 0 134 60" style="filter:blur(.4px)"><rect width="134" height="60" fill="#2a78b0"/><path d="M0 0h14l6 38H0z" fill="#3c5a3c"/><path d="M18 38L45 26L63 12L85 26L110 38V60H18z" fill="#85806f"/><path d="M38 40L55 24L63 14L72 24L95 40V60H38z" fill="#d9c79f"/><rect x="60" y="28" width="8" height="8" fill="#7a8da0"/></svg></div>
<div class="t" style="left:1523px;top:2070px;font-size:6px;color:#ec4899">Copy this</div>
<svg class="i" style="left:1552px;top:2066px" width="14" height="8" fill="none" stroke="#ec4899"><path d="M1 2c4-2 8 0 11 5M12 3v4H8"/></svg>
<div class="a" style="left:1523px;top:2077px;width:108px;height:3px;background:#333"></div>
<div class="a" style="left:1523px;top:2080px;width:108px;height:9px;background:#6d28d9"></div>
<div class="a" style="left:1523px;top:2089px;width:108px;height:30px;background:#efefef"></div>
<div class="a" style="left:1545px;top:2089px;width:62px;height:30px;background:#fff"></div>
</div>

<!-- edit mode -->
<div class="a" style="left:955px;top:2036px;width:165px;height:47px;background:#dbeafe;border:2px solid #93c5fd;border-radius:8px"></div>
<div class="t" style="left:969px;top:2059px;font-size:17.5px;color:#1e40af;-webkit-text-stroke:.25px #1e40af;letter-spacing:.35px">Edit mode</div>
<div class="a" style="left:1071px;top:2049px;width:35px;height:20px;border-radius:10px;background:#3b82f6"></div>
<div class="a" style="left:1090px;top:2052px;width:14px;height:14px;border-radius:50%;background:#fff"></div>

</body></html>
